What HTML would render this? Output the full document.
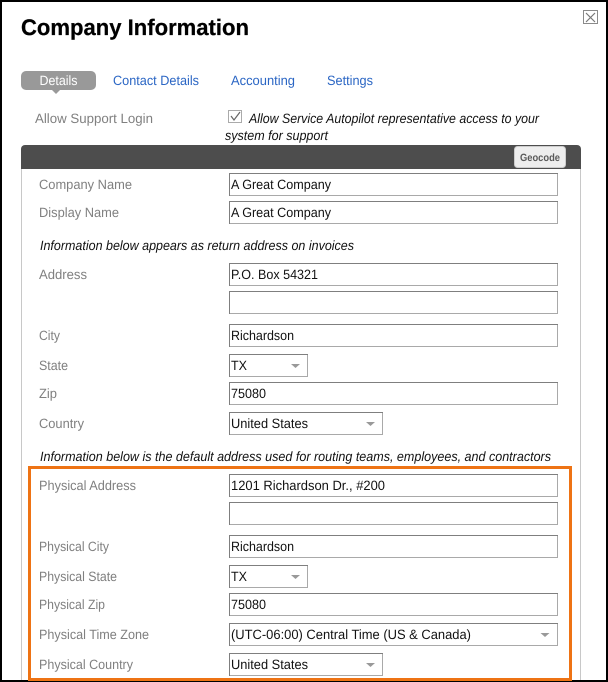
<!DOCTYPE html>
<html><head><meta charset="utf-8"><title>Company Information</title>
<style>
html,body{margin:0;padding:0;background:#fff;width:608px;height:682px;overflow:hidden}
svg{display:block}
text{font-family:"Liberation Sans",sans-serif;font-size:13.5px;text-rendering:geometricPrecision}
.l{fill:#808080}
.v{fill:#111}
.i{fill:#111;font-style:italic}
.t{fill:#2b66c4}
.b{fill:#fff;stroke:#a9a9a9;stroke-width:1}
.bt{stroke:#7f7f7f;stroke-width:1}
.a{fill:#999}
</style></head><body>
<svg width="608" height="682" viewBox="0 0 608 682" xmlns="http://www.w3.org/2000/svg">
<rect width="608" height="682" fill="#fff"/>

<text x="21" y="35" textLength="228" lengthAdjust="spacingAndGlyphs" style="font-size:22.5px;font-weight:bold;fill:#000;stroke:#000;stroke-width:.25px">Company Information</text>

<rect x="583.5" y="10.5" width="14" height="13" fill="#fff" stroke="#8a8a8a"/>
<path d="M586 13L595 22M595 13L586 22" stroke="#777" stroke-width="1.2" fill="none"/>

<rect x="21" y="71" width="75" height="19" rx="5" fill="#999"/>
<path d="M52 90L56 94L60 90Z" fill="#999"/>
<text x="39.5" y="85" textLength="38" lengthAdjust="spacingAndGlyphs" fill="#fff">Details</text>
<text class="t" x="113" y="85" textLength="86" lengthAdjust="spacingAndGlyphs">Contact Details</text>
<text class="t" x="231" y="85" textLength="64" lengthAdjust="spacingAndGlyphs">Accounting</text>
<text class="t" x="327" y="85" textLength="46" lengthAdjust="spacingAndGlyphs">Settings</text>

<text class="l" x="35" y="123" textLength="118" lengthAdjust="spacingAndGlyphs">Allow Support Login</text>
<rect x="228.5" y="110.5" width="13" height="12" fill="#fff" stroke="#aaa"/>
<path d="M231 116L234 120L240 112" stroke="#666" stroke-width="1.2" fill="none"/>
<text class="i" x="249" y="123" textLength="290" lengthAdjust="spacingAndGlyphs">Allow Service Autopilot representative access to your</text>
<text class="i" x="225" y="140" textLength="103" lengthAdjust="spacingAndGlyphs">system for support</text>

<path d="M21 169V149a4 4 0 0 1 4-4H577a4 4 0 0 1 4 4V169Z" fill="#4d4d4d"/>
<rect x="514.5" y="146.5" width="51" height="21" rx="3" fill="#eee" stroke="#ccc"/>
<text x="520" y="161" textLength="40" lengthAdjust="spacingAndGlyphs" style="font-size:10.5px;font-weight:bold;fill:#5a5a5a">Geocode</text>
<rect x="21" y="169" width="1" height="513" fill="#c8c8c8"/>
<rect x="580" y="169" width="1" height="513" fill="#c8c8c8"/>

<!-- Fields -->
<rect class="b" x="229.5" y="173.5" width="328" height="22"/><path class="bt" d="M229 173.5H558M229.5 173V196"/>
<rect class="b" x="229.5" y="201.5" width="328" height="22"/><path class="bt" d="M229 201.5H558M229.5 201V224"/>
<rect class="b" x="229.5" y="263.5" width="328" height="22"/><path class="bt" d="M229 263.5H558M229.5 263V286"/>
<rect class="b" x="229.5" y="291.5" width="328" height="22"/><path class="bt" d="M229 291.5H558M229.5 291V314"/>
<rect class="b" x="229.5" y="324.5" width="328" height="22"/><path class="bt" d="M229 324.5H558M229.5 324V347"/>
<rect class="b" x="229.5" y="354.5" width="78" height="22"/><path class="bt" d="M229 354.5H308M229.5 354V377"/>
<rect class="b" x="229.5" y="382.5" width="328" height="22"/><path class="bt" d="M229 382.5H558M229.5 382V405"/>
<rect class="b" x="229.5" y="412.5" width="153" height="22"/><path class="bt" d="M229 412.5H383M229.5 412V435"/>
<rect class="b" x="229.5" y="474.5" width="328" height="22"/><path class="bt" d="M229 474.5H558M229.5 474V497"/>
<rect class="b" x="229.5" y="502.5" width="328" height="22"/><path class="bt" d="M229 502.5H558M229.5 502V525"/>
<rect class="b" x="229.5" y="535.5" width="328" height="22"/><path class="bt" d="M229 535.5H558M229.5 535V558"/>
<rect class="b" x="229.5" y="565.5" width="78" height="22"/><path class="bt" d="M229 565.5H308M229.5 565V588"/>
<rect class="b" x="229.5" y="593.5" width="328" height="22"/><path class="bt" d="M229 593.5H558M229.5 593V616"/>
<rect class="b" x="229.5" y="623.5" width="328" height="22"/><path class="bt" d="M229 623.5H558M229.5 623V646"/>
<rect class="b" x="229.5" y="653.5" width="153" height="22"/><path class="bt" d="M229 653.5H383M229.5 653V676"/>

<path class="a" d="M291 364H300L295.5 368Z"/>
<path class="a" d="M366 422H375L370.5 426Z"/>
<path class="a" d="M291 575H300L295.5 579Z"/>
<path class="a" d="M540.5 633H549.5L545 637Z"/>
<path class="a" d="M366 663H375L370.5 667Z"/>

<text class="l" x="39" y="189" textLength="93" lengthAdjust="spacingAndGlyphs">Company Name</text>
<text class="v" x="231" y="189" textLength="100" lengthAdjust="spacingAndGlyphs">A Great Company</text>
<text class="l" x="39" y="217" textLength="80" lengthAdjust="spacingAndGlyphs">Display Name</text>
<text class="v" x="231" y="217" textLength="100" lengthAdjust="spacingAndGlyphs">A Great Company</text>
<text class="i" x="40" y="250" textLength="314" lengthAdjust="spacingAndGlyphs">Information below appears as return address on invoices</text>
<text class="l" x="39" y="279" textLength="48" lengthAdjust="spacingAndGlyphs">Address</text>
<text class="v" x="231" y="279" textLength="87" lengthAdjust="spacingAndGlyphs">P.O. Box 54321</text>
<text class="l" x="39" y="340" textLength="21" lengthAdjust="spacingAndGlyphs">City</text>
<text class="v" x="231" y="340" textLength="63" lengthAdjust="spacingAndGlyphs">Richardson</text>
<text class="l" x="39" y="370" textLength="29" lengthAdjust="spacingAndGlyphs">State</text>
<text class="v" x="231" y="370" textLength="16" lengthAdjust="spacingAndGlyphs">TX</text>
<text class="l" x="39" y="398" textLength="18" lengthAdjust="spacingAndGlyphs">Zip</text>
<text class="v" x="231" y="398" textLength="35" lengthAdjust="spacingAndGlyphs">75080</text>
<text class="l" x="39" y="428" textLength="45" lengthAdjust="spacingAndGlyphs">Country</text>
<text class="v" x="231" y="428" textLength="77" lengthAdjust="spacingAndGlyphs">United States</text>
<text class="i" x="40" y="461" textLength="511" lengthAdjust="spacingAndGlyphs">Information below is the default address used for routing teams, employees, and contractors</text>

<text class="l" x="39" y="490" textLength="97" lengthAdjust="spacingAndGlyphs">Physical Address</text>
<text class="v" x="231" y="490" textLength="154" lengthAdjust="spacingAndGlyphs">1201 Richardson Dr., #200</text>
<text class="l" x="39" y="551" textLength="70" lengthAdjust="spacingAndGlyphs">Physical City</text>
<text class="v" x="231" y="551" textLength="63" lengthAdjust="spacingAndGlyphs">Richardson</text>
<text class="l" x="39" y="581" textLength="78" lengthAdjust="spacingAndGlyphs">Physical State</text>
<text class="v" x="231" y="581" textLength="16" lengthAdjust="spacingAndGlyphs">TX</text>
<text class="l" x="39" y="609" textLength="66" lengthAdjust="spacingAndGlyphs">Physical Zip</text>
<text class="v" x="231" y="609" textLength="35" lengthAdjust="spacingAndGlyphs">75080</text>
<text class="l" x="39" y="639" textLength="110" lengthAdjust="spacingAndGlyphs">Physical Time Zone</text>
<text class="v" x="231" y="639" textLength="240" lengthAdjust="spacingAndGlyphs">(UTC-06:00) Central Time (US &amp; Canada)</text>
<text class="l" x="39" y="669" textLength="94" lengthAdjust="spacingAndGlyphs">Physical Country</text>
<text class="v" x="231" y="669" textLength="77" lengthAdjust="spacingAndGlyphs">United States</text>

<rect x="29.5" y="467.5" width="541" height="212" fill="none" stroke="#ee7314" stroke-width="3"/>

<rect x="0" y="0" width="608" height="2" fill="#000"/>
<rect x="0" y="0" width="2" height="682" fill="#000"/>
<rect x="606" y="0" width="2" height="682" fill="#000"/>
<rect x="0" y="680" width="28" height="2" fill="#000"/>
<rect x="28" y="681" width="580" height="1" fill="#000"/>
<rect x="572" y="680" width="36" height="2" fill="#000"/>
</svg>
</body></html>
